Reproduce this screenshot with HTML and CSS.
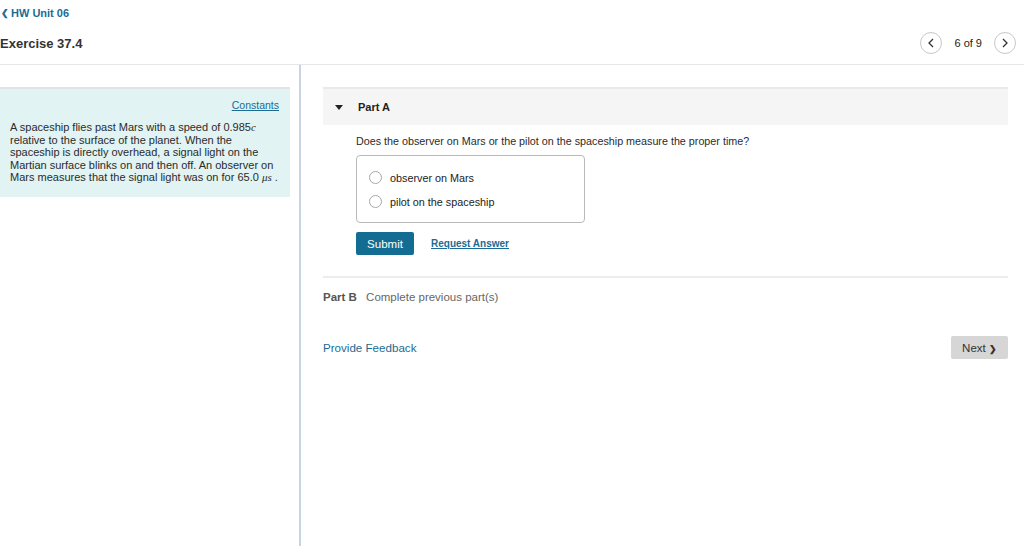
FILE: index.html
```html
<!DOCTYPE html>
<html lang="en">
<head>
    <meta charset="UTF-8">
    <title>Exercise 37.4</title>
    <link rel="stylesheet" href="styles.css">
</head>
<body>
    <header class="top">
        <a class="back-link" href="#"><span class="chev">&#10094;</span>HW Unit 06</a>
        <div class="title-row">
            <h1 class="title">Exercise 37.4</h1>
            <div class="pager">
                <button class="circle-btn" aria-label="previous">
                    <svg width="8" height="10" viewBox="0 0 8 10"><path d="M6 1 L2 5 L6 9" fill="none" stroke="#333" stroke-width="1.3"/></svg>
                </button>
                <span class="pager-text">6 of 9</span>
                <button class="circle-btn" aria-label="next">
                    <svg width="8" height="10" viewBox="0 0 8 10"><path d="M2 1 L6 5 L2 9" fill="none" stroke="#333" stroke-width="1.3"/></svg>
                </button>
            </div>
        </div>
    </header>

    <main class="layout">
        <aside class="left">
            <div class="intro">
                <div class="constants"><a href="#">Constants</a></div>
                <p>A spaceship flies past Mars with a speed of 0.985<i class="math">c</i>
                relative to the surface of the planet. When the spaceship is directly overhead, a signal light on the
                Martian surface blinks on and then off. An observer on Mars measures that the signal light was on for <span class="nowrap">65.0 <i class="math">&mu;s</i> .</span></p>
            </div>
        </aside>

        <div class="divider"></div>

        <section class="right">
            <div class="part-head">
                <span class="tri"></span>
                <span class="part-name">Part A</span>
            </div>
            <div class="part-body">
                <p class="question">Does the observer on Mars or the pilot on the spaceship measure the proper time?</p>
                <div class="options">
                    <label class="option"><span class="radio"></span>observer on Mars</label>
                    <label class="option"><span class="radio"></span>pilot on the spaceship</label>
                </div>
                <div class="actions">
                    <button class="submit">Submit</button>
                    <a class="request" href="#">Request Answer</a>
                </div>
            </div>

            <div class="part-b">
                <b>Part B</b>
                <span>Complete previous part(s)</span>
            </div>

            <div class="footer-row">
                <a class="feedback" href="#">Provide Feedback</a>
                <button class="next">Next <span class="next-chev">&#10095;</span></button>
            </div>
        </section>
    </main>
</body>
</html>
```

FILE: styles.css
```css
:root {
    --link: #1a6c94;
    --text: #333333;
    --line: #e6e6e6;
}

* {
    margin: 0;
    padding: 0;
    box-sizing: border-box;
}

body {
    font-family: "Liberation Sans", Arial, sans-serif;
    color: var(--text);
    background: #fff;
    height: 546px;
    overflow: hidden;
    display: flex;
    flex-direction: column;
}

.top {
    border-bottom: 1px solid var(--line);
    padding-top: 2px;
    height: 65px;
}

.back-link {
    display: inline-flex;
    align-items: center;
    color: var(--link);
    font-weight: bold;
    font-size: 11px;
    text-decoration: none;
    margin-left: 1px;
}

.chev {
    font-size: 9px;
    margin-right: 2px;
}

.title-row {
    display: flex;
    justify-content: space-between;
    align-items: center;
    margin-top: 12px;
    padding-right: 8px;
}

.title {
    font-size: 13px;
    font-weight: bold;
}

.pager {
    display: flex;
    align-items: center;
    gap: 12px;
}

.circle-btn {
    width: 22px;
    height: 22px;
    border-radius: 50%;
    border: 1px solid #c8c8c8;
    background: #fff;
    display: flex;
    align-items: center;
    justify-content: center;
}

.pager-text {
    font-size: 11px;
    color: #222;
}

.layout {
    flex: 1;
    display: flex;
}

.left {
    width: 290px;
    padding-top: 22px;
}

.intro {
    background: #e1f3f3;
    border-top: 2px solid #dfe5e6;
    padding: 10px 9px 13px 10px;
}

.constants {
    text-align: right;
    font-size: 10.5px;
    margin-bottom: 10px;
    margin-right: 2px;
}

.constants a {
    color: var(--link);
}

.intro p {
    width: 271px;
    font-size: 11px;
    line-height: 12.5px;
    color: #2b2b2b;
}

.nowrap {
    white-space: nowrap;
}

.math {
    font-family: "Liberation Serif", serif;
    font-size: 11px;
}

.divider {
    width: 2px;
    background: #c7d4e3;
    margin-left: 9px;
}

.right {
    flex: 1;
    padding: 22px 16px 0 22px;
}

.part-head {
    background: #f5f5f5;
    border-top: 2px solid #e9e9e9;
    height: 38px;
    display: flex;
    align-items: center;
    padding-left: 12px;
}

.tri {
    width: 0;
    height: 0;
    border-left: 4px solid transparent;
    border-right: 4px solid transparent;
    border-top: 5px solid #222;
    margin-right: 15px;
}

.part-name {
    font-size: 11px;
    font-weight: bold;
    color: #222;
}

.part-body {
    padding-left: 33px;
    padding-top: 10px;
}

.question {
    font-size: 10.75px;
    color: #2b2b2b;
}

.options {
    width: 229px;
    border: 1px solid #b9b9b9;
    border-radius: 4px;
    margin-top: 8px;
    padding: 15px 12px 14px;
    display: flex;
    flex-direction: column;
    gap: 11px;
}

.option {
    display: flex;
    align-items: center;
    font-size: 10.8px;
    color: #222;
}

.radio {
    width: 13px;
    height: 13px;
    border: 1px solid #a9a9a9;
    border-radius: 50%;
    margin-right: 8px;
    background: #fff;
}

.actions {
    display: flex;
    align-items: center;
    gap: 17px;
    margin-top: 9px;
}

.submit {
    width: 58px;
    height: 23px;
    background: #136c92;
    color: #fff;
    border: none;
    border-radius: 2px;
    font-family: inherit;
    font-size: 11.5px;
}

.request {
    color: var(--link);
    font-size: 10px;
    font-weight: bold;
}

.part-b {
    border-top: 2px solid #ececec;
    margin-top: 21px;
    padding-top: 13px;
    font-size: 11.5px;
    color: #666;
}

.part-b b {
    color: #555;
    margin-right: 6px;
}

.footer-row {
    display: flex;
    justify-content: space-between;
    align-items: center;
    margin-top: 33px;
}

.feedback {
    color: var(--link);
    font-size: 11.6px;
    text-decoration: none;
}

.next {
    width: 57px;
    height: 23px;
    background: #d6d6d6;
    border: none;
    border-radius: 2px;
    font-family: inherit;
    font-size: 11.5px;
    color: #333;
}

.next-chev {
    font-size: 9px;
    font-weight: bold;
}
```
